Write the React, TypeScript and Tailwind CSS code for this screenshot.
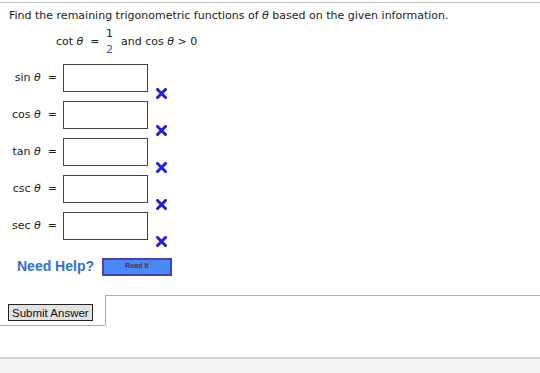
const rows = ["sin", "cos", "tan", "csc", "sec"];

function Cross() {
    return (
        <svg width="11" height="11" viewBox="0 0 11 11" className="shrink-0">
            <path d="M1.5 1.5 L9.5 9.5 M9.5 1.5 L1.5 9.5" stroke="#1f1fd6" strokeWidth="3" strokeLinecap="square" />
        </svg>
    );
}

export default function App() {
    return (
        <div className="w-[540px] h-[373px] bg-white flex flex-col font-['DejaVu_Sans',sans-serif] text-[#222]">
            <div className="mt-[2px] border-t border-[#c8c8c8]" />
            <p className="pl-[9px] pt-[6px] text-[11px] leading-[14px]">
                Find the remaining trigonometric functions of <i>θ</i> based on the given information.
            </p>

            <div className="flex items-center pl-[56px] mt-[5px] text-[11px] h-[28px]">
                <span>
                    cot <i>θ</i> &nbsp;=&nbsp;
                </span>
                <span className="inline-flex flex-col items-center mx-[3px] leading-[16px]">
                    <span>1</span>
                    <span className="text-[#2a5bd7]">2</span>
                </span>
                <span className="ml-[5px]">
                    and cos <i>θ</i> &gt; 0
                </span>
            </div>

            <div className="flex flex-col gap-[9px] mt-[8px]">
                {rows.map((r) => (
                    <div key={r} className="flex items-end">
                        <div className="w-[63px] h-[28px] flex items-center justify-end pr-[6px] text-[11px]">
                            <span>
                                {r} <i>θ</i> &nbsp;=
                            </span>
                        </div>
                        <div className="w-[85px] h-[28px] border border-[#444] bg-white" />
                        <div className="ml-[8px] mb-[-7px]">
                            <Cross />
                        </div>
                    </div>
                ))}
            </div>

            <div className="flex items-center mt-[16px] pl-[17px]">
                <span className="font-['Liberation_Sans',sans-serif] font-bold text-[14px] text-[#2f6fe0]">Need Help?</span>
                <div className="ml-[8px] w-[70px] h-[18px] bg-[#4a8af7] border-2 border-[#4a3fbf] flex items-center justify-center">
                    <span className="font-['Liberation_Sans',sans-serif] text-[7px] font-bold text-[#7a1a3a]">Read It</span>
                </div>
            </div>

            <div className="flex mt-[18px] h-[31px]">
                <div className="w-[105px] border-b border-[#aaa] pl-[8px] pt-[9px] flex items-start">
                    <button className="h-[17px] px-[3px] bg-[#e2e2e2] border border-[#222] font-['Liberation_Sans',sans-serif] text-[11.5px] leading-[14px] text-[#111]">
                        Submit Answer
                    </button>
                </div>
                <div className="flex-1 border-t border-l border-[#aaa] rounded-bl-[2px]" />
            </div>

            <div className="mt-[31px] flex-1 border-t-2 border-[#d4d4d4] bg-[#f2f2f2]" />
        </div>
    );
}
